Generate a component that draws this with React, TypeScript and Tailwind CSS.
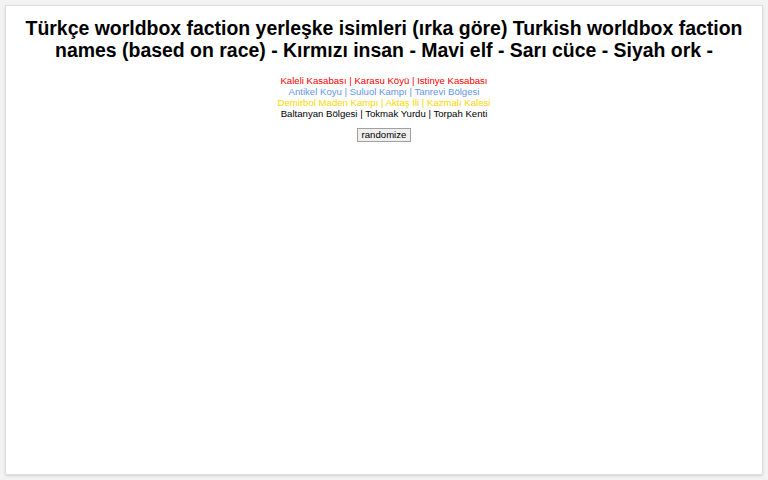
const App = (): JSX.Element => {
  const rows = [
    { color: 'text-[#ff0000]', names: ['Kaleli Kasabası', 'Karasu Köyü', 'Istinye Kasabası'] },
    { color: 'text-[#6495ed]', names: ['Antikel Koyu', 'Suluol Kampı', 'Tanrevi Bölgesi'] },
    { color: 'text-[#ffd700]', names: ['Demirbol Maden Kampı', 'Aktaş İli', 'Kazmalı Kalesi'] },
    { color: 'text-black', names: ['Baltanyan Bölgesi', 'Tokmak Yurdu', 'Torpah Kenti'] },
  ];

  return (
    <div className="h-[480px] bg-[#f3f3f3] p-[5px] font-['Liberation_Sans',Arial,sans-serif]">
      <div className="h-full border border-[#dcdcdc] bg-white px-2 pt-[11px] text-center shadow-sm">
        <h1 className="text-[19.45px] font-bold leading-[22px] text-black">
          Türkçe worldbox faction yerleşke isimleri (ırka göre) Turkish worldbox faction names (based on race) -
          Kırmızı insan - Mavi elf - Sarı cüce - Siyah ork -
        </h1>
        <div className="mt-[14px] text-[9.6px] leading-[11px]">
          {rows.map(row => (
            <p className={row.color} key={row.names[0]}>
              {row.names.join(' | ')}
            </p>
          ))}
        </div>
        <button className="mt-[9px] border border-[#a0a0a0] bg-[#efefef] px-[4px] text-[9.6px] leading-[12px] text-black">
          randomize
        </button>
      </div>
    </div>
  );
};

export default App;
